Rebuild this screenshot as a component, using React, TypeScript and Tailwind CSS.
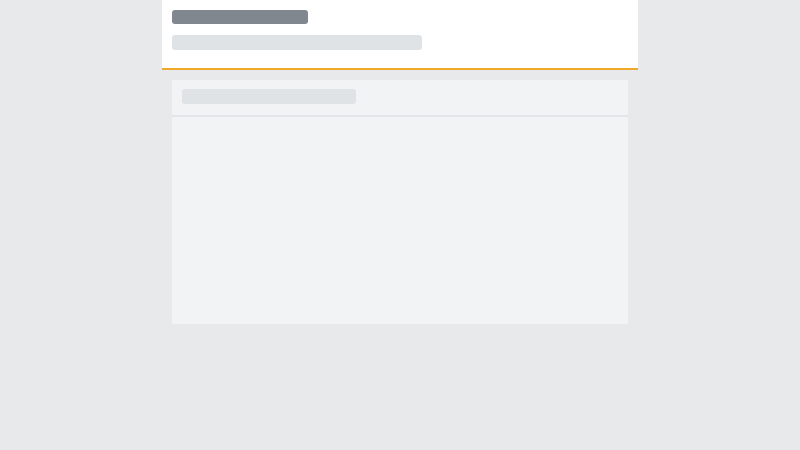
export default function App() {
  return (
    <div className="min-h-screen bg-[#e8e9eb]">
      <div className="mx-auto w-[476px]">
        <div className="h-[70px] bg-white px-[10px] pt-[10px] border-b-2 border-[#eea92a]">
          <div className="h-[14px] w-[136px] rounded-[3px] bg-[#80878e]" />
          <div className="mt-[11px] h-[15px] w-[250px] rounded-[3px] bg-[#e0e3e6]" />
        </div>
        <div className="px-[10px] pt-[10px]">
          <div className="bg-[#f1f3f5]">
            <div className="h-[37px] border-b-2 border-[#e3e6e9] px-[10px] pt-[9px]">
              <div className="h-[15px] w-[174px] rounded-[3px] bg-[#e0e3e6]" />
            </div>
            <div className="h-[207px]" />
          </div>
        </div>
      </div>
    </div>
  )
}
